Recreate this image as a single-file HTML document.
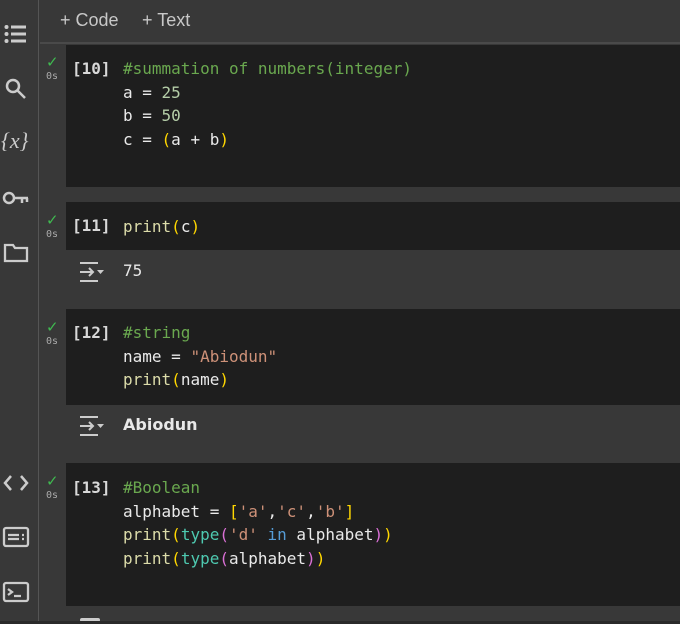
<!DOCTYPE html>
<html><head><style>
*{margin:0;padding:0;box-sizing:border-box}
body{width:680px;height:624px;background:#383838;position:relative;overflow:hidden;font-family:"Liberation Sans",sans-serif}
.side{position:absolute;left:0;top:0;width:39px;height:624px;background:#383838;border-right:1px solid #555}
.hdr{position:absolute;left:40px;top:0;right:0;height:44px;border-bottom:2px solid #4a4a4a;color:#c8c8c8;font-size:18px}
.hdr span{position:absolute;top:10px}
.cell{position:absolute;left:66px;right:0;background:#1e1e1e}
.code{position:absolute;font-family:"DejaVu Sans Mono",monospace;font-size:16px;line-height:23.5px;color:#eaeaea;white-space:pre}
.num{position:absolute;left:72px;font-family:"DejaVu Sans Mono",monospace;font-size:16px;color:#d8d8d8;font-weight:bold}
.chk{position:absolute;left:46px;color:#3fb950;font-size:15px}
.os{position:absolute;left:46px;color:#aaa;font-size:10px;font-family:"DejaVu Sans Mono",monospace}
.g{color:#6aa84f}.n{color:#b5cea8}.y{color:#ffd700}.s{color:#ce9178}.f{color:#dcdcaa}.p{color:#da70d6}.t{color:#4ec9b0}.b{color:#569cd6}
.out{position:absolute;left:123px;font-family:"DejaVu Sans Mono",monospace;font-size:16px;color:#e8e8e8}
svg{position:absolute}
</style></head><body>
<div class="side">
<svg style="left:4px;top:24px" width="24" height="20" viewBox="0 0 24 20" fill="#ccc"><circle cx="2.5" cy="3" r="2"/><circle cx="2.5" cy="10" r="2"/><circle cx="2.5" cy="17" r="2"/><rect x="7" y="1.5" width="15" height="3"/><rect x="7" y="8.5" width="15" height="3"/><rect x="7" y="15.5" width="15" height="3"/></svg>
<svg style="left:4px;top:77px" width="24" height="24" fill="none" stroke="#ccc" stroke-width="2.5"><circle cx="9" cy="9" r="6"/><path d="M13 13l8 8"/></svg>
<div style="position:absolute;left:1px;top:128px;color:#ccc;font-family:'Liberation Serif',serif;font-style:italic;font-size:22px">{<i>x</i>}</div>
<svg style="left:2px;top:188px" width="28" height="20" fill="none" stroke="#ccc" stroke-width="2.5"><circle cx="7" cy="10" r="5"/><path d="M12 10h14M20 10v5M25 10v4"/></svg>
<svg style="left:3px;top:242px" width="26" height="22" fill="none" stroke="#ccc" stroke-width="2.3"><path d="M2 3h8l2 3h12v13H2z"/></svg>
<svg style="left:2px;top:473px" width="28" height="20" fill="none" stroke="#ccc" stroke-width="2.5"><path d="M9 3L3 10l6 7M19 3l6 7-6 7"/></svg>
<svg style="left:2px;top:526px" width="28" height="22" fill="none" stroke="#ccc" stroke-width="2.3"><rect x="2" y="2" width="24" height="18" rx="2"/><path d="M6 9h11M6 13h11M20 9h2M20 13h2"/></svg>
<svg style="left:2px;top:581px" width="28" height="22" fill="none" stroke="#ccc" stroke-width="2.3"><rect x="2" y="2" width="24" height="18" rx="2"/><path d="M6 8l4 3-4 3M12 15h7"/></svg>
</div>
<div class="hdr"><span style="left:20px">+ Code</span><span style="left:102px">+ Text</span></div>

<div class="cell" style="top:45px;height:142px"></div>
<div class="chk" style="top:53px">✓</div><div class="os" style="top:71px">0s</div>
<div class="num" style="top:59px">[10]</div>
<div class="code" style="left:123px;top:57px"><span class="g">#summation of numbers(integer)</span>
a = <span class="n">25</span>
b = <span class="n">50</span>
c = <span class="y">(</span>a + b<span class="y">)</span></div>

<div class="cell" style="top:202px;height:48px"></div>
<div class="chk" style="top:211px">✓</div><div class="os" style="top:229px">0s</div>
<div class="num" style="top:216px">[11]</div>
<div class="code" style="left:123px;top:215px"><span class="f">print</span><span class="y">(</span>c<span class="y">)</span></div>
<svg style="left:78px;top:261px" width="28" height="22" fill="none" stroke="#ccc" stroke-width="2"><path d="M2 2h18M2 20h18M2 11h13M11 7l4 4-4 4"/><path d="M19 9h7l-3.5 4z" fill="#ccc" stroke="none"/></svg>
<div class="out" style="top:261px">75</div>

<div class="cell" style="top:309px;height:96px"></div>
<div class="chk" style="top:318px">✓</div><div class="os" style="top:336px">0s</div>
<div class="num" style="top:323px">[12]</div>
<div class="code" style="left:123px;top:321px"><span class="g">#string</span>
name = <span class="s">"Abiodun"</span>
<span class="f">print</span><span class="y">(</span>name<span class="y">)</span></div>
<svg style="left:78px;top:415px" width="28" height="22" fill="none" stroke="#ccc" stroke-width="2"><path d="M2 2h18M2 20h18M2 11h13M11 7l4 4-4 4"/><path d="M19 9h7l-3.5 4z" fill="#ccc" stroke="none"/></svg>
<div class="out" style="top:415px;font-family:'DejaVu Sans',sans-serif;font-weight:bold;font-size:16px">Abiodun</div>

<div class="cell" style="top:463px;height:143px"></div>
<div class="chk" style="top:472px">✓</div><div class="os" style="top:490px">0s</div>
<div class="num" style="top:478px">[13]</div>
<div class="code" style="left:123px;top:476px"><span class="g">#Boolean</span>
alphabet = <span class="y">[</span><span class="s">'a'</span>,<span class="s">'c'</span>,<span class="s">'b'</span><span class="y">]</span>
<span class="f">print</span><span class="y">(</span><span class="t">type</span><span class="p">(</span><span class="s">'d'</span> <span class="b">in</span> alphabet<span class="p">)</span><span class="y">)</span>
<span class="f">print</span><span class="y">(</span><span class="t">type</span><span class="p">(</span>alphabet<span class="p">)</span><span class="y">)</span></div>

<div style="position:absolute;left:80px;top:618px;width:20px;height:4px;background:#ccc;border-radius:2px"></div>
<div style="position:absolute;left:0;top:621px;width:680px;height:3px;background:#2a2a2a"></div>
</body></html>
